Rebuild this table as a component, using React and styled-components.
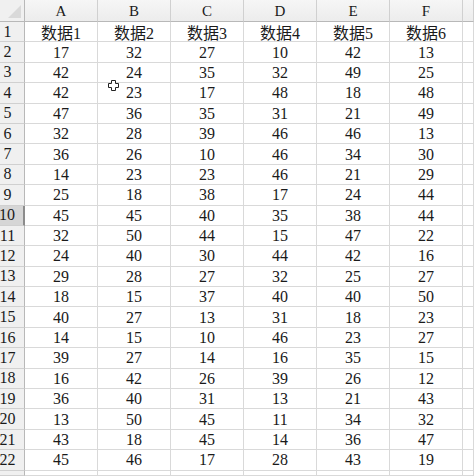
import React from 'react';
import styled, { createGlobalStyle } from 'styled-components';

/* global */
const GlobalStyle = createGlobalStyle`
  html, body {
    margin: 0;
    padding: 0;
    background: #ffffff;
    overflow: hidden;
  }
`;

// sheet grid
const Sheet = styled.div`
  position: relative;
  width: 474px;
  height: 476px;
  overflow: hidden;
  display: grid;
  grid-template-columns: 25px repeat(6, 73px) 1fr;
  grid-template-rows: 22px repeat(22, 20.4px) 1fr;
  font-family: 'Liberation Serif', 'Noto Sans CJK SC', serif;
  color: #1a1a1a;
`;

// top-left corner
const Corner = styled.div`
  position: relative;
  background: #f0f0f0;
  border-right: 1px solid #b8b8b8;
  border-bottom: 1px solid #b8b8b8;
  box-sizing: border-box;

  &::after {
    content: '';
    position: absolute;
    right: 3px;
    bottom: 3px;
    width: 0;
    height: 0;
    border-left: 13px solid transparent;
    border-bottom: 13px solid #d9d9d9;
  }
`;

// column letter header
const ColHeader = styled.div`
  display: flex;
  align-items: center;
  justify-content: center;
  background: linear-gradient(#f6f6f6, #ececec);
  border-right: 1px solid #d0d0d0;
  border-bottom: 1px solid #b8b8b8;
  box-sizing: border-box;
  font-size: 15px;
  padding-top: 1px;
`;

// row number header
const RowHeader = styled.div`
  display: flex;
  align-items: center;
  justify-content: center;
  padding-right: 9px;
  background: ${(p) => (p.$active ? '#d6d6d6' : '#f0f0f0')};
  border-right: ${(p) => (p.$active ? '2px solid #8c8c8c' : '1px solid #b8b8b8')};
  border-bottom: 1px solid #d0d0d0;
  box-sizing: border-box;
  font-size: 16px;
  white-space: nowrap;
`;

// data cell
const Cell = styled.div`
  display: flex;
  align-items: center;
  justify-content: center;
  border-right: 1px solid #d9d9d9;
  border-bottom: 1px solid #d9d9d9;
  box-sizing: border-box;
  font-size: 16px;
  white-space: nowrap;
  padding-top: 1px;
`;

// cursor overlay
const Cursor = styled.svg`
  position: absolute;
  left: 108px;
  top: 80px;
`;

const columns = ['A', 'B', 'C', 'D', 'E', 'F', ''];

const rows = [
  ['数据1', '数据2', '数据3', '数据4', '数据5', '数据6'],
  [17, 32, 27, 10, 42, 13],
  [42, 24, 35, 32, 49, 25],
  [42, 23, 17, 48, 18, 48],
  [47, 36, 35, 31, 21, 49],
  [32, 28, 39, 46, 46, 13],
  [36, 26, 10, 46, 34, 30],
  [14, 23, 23, 46, 21, 29],
  [25, 18, 38, 17, 24, 44],
  [45, 45, 40, 35, 38, 44],
  [32, 50, 44, 15, 47, 22],
  [24, 40, 30, 44, 42, 16],
  [29, 28, 27, 32, 25, 27],
  [18, 15, 37, 40, 40, 50],
  [40, 27, 13, 31, 18, 23],
  [14, 15, 10, 46, 23, 27],
  [39, 27, 14, 16, 35, 15],
  [16, 42, 26, 39, 26, 12],
  [36, 40, 31, 13, 21, 43],
  [13, 50, 45, 11, 34, 32],
  [43, 18, 45, 14, 36, 47],
  [45, 46, 17, 28, 43, 19]
];

function App() {
  return (
    <>
      <GlobalStyle />
      <Sheet>
        <Corner />
        {columns.map((c, i) => (
          <ColHeader key={'h' + i}>{c}</ColHeader>
        ))}

        {rows.map((row, r) => (
          <React.Fragment key={r}>
            <RowHeader $active={r === 9}>{r + 1}</RowHeader>
            {row.map((v, c) => (
              <Cell key={c}>{v}</Cell>
            ))}
            <Cell />
          </React.Fragment>
        ))}

        {/* partial row below 22, cut by the window */}
        <RowHeader />
        {columns.map((c, i) => (
          <Cell key={'e' + i} />
        ))}

        <Cursor width="11" height="11" viewBox="0 0 11 11">
          <path
            d="M3.5 0.5h4v3h3v4h-3v3h-4v-3h-3v-4h3z"
            fill="#ffffff"
            stroke="#222222"
            strokeWidth="1"
          />
        </Cursor>
      </Sheet>
    </>
  );
}

export default App;
